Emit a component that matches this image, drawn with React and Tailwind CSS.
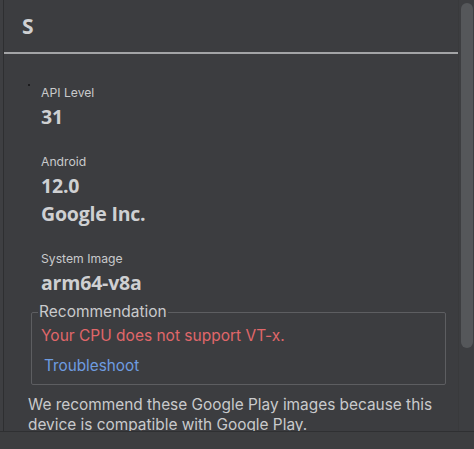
import React from "react";

const Field = ({ label, values }) => (
  <div className="mb-[25px]">
    <div className="text-[12.2px] leading-[16px] text-[#c9cacc]">{label}</div>
    {values.map((v) => (
      <div key={v} className="mt-[4px] font-['Open_Sans',sans-serif] text-[19.5px] font-bold leading-[24px] tracking-[-0.2px] text-[#cfd0d2]">
        {v}
      </div>
    ))}
  </div>
);

const App = () => {
  return (
    <div className="flex h-[449px] w-[474px] flex-col overflow-hidden bg-[#3c3d40] font-['Inter',sans-serif]">
      <div className="flex h-[431px] min-h-0">
        {/* left edge */}
        <div className="w-[3px] bg-[#3e3f42]" />
        <div className="w-px bg-[#2e2f31]" />

        {/* main panel */}
        <div className="flex min-w-0 flex-1 flex-col overflow-hidden">
          <div className="flex h-[54px] shrink-0 items-center border-b-2 border-[#a3a4a6] pl-[18px] pt-[2px]">
            <span className="font-['Open_Sans',sans-serif] text-[21px] font-bold text-[#cfd0d2]">S</span>
          </div>

          <div className="relative pl-[37px] pt-[31px]">
            <span className="absolute left-[24px] top-[30px] h-[2px] w-[2px] bg-[#1c1c1e]" />
            <Field label="API Level" values={["31"]} />
            <Field label="Android" values={["12.0", "Google Inc."]} />
            <Field label="System Image" values={["arm64-v8a"]} />
          </div>

          <fieldset className="ml-[27px] mr-[12px] -mt-[17px] shrink-0 rounded-[2px] border border-[#5d5e61] px-[9px] pb-[9px]">
            <legend className="ml-[-3px] px-[1px] text-[15.5px] leading-[18px] text-[#c9cacc]">Recommendation</legend>
            <div className="mt-[6px] text-[15.5px] leading-[18px] text-[#e0676a]">Your CPU does not support VT-x.</div>
            <div className="mt-[12px] pl-[3px] text-[15.3px] leading-[18px] text-[#6e9ce0]">Troubleshoot</div>
          </fieldset>

          <p className="mt-[10px] pl-[24px] pr-[12px] text-[15.4px] leading-[20px] text-[#c9cacc]">
            We recommend these Google Play images because this device is compatible with Google Play.
          </p>
        </div>

        {/* scrollbar */}
        <div className="w-[16px] border-l border-[#393a3c] bg-[#3d3e41] pt-[3px]">
          <div className="ml-[2px] h-[345px] w-[12px] rounded-full bg-[#55575a]" />
        </div>
      </div>

      <div className="flex-1 border-t border-[#2f3032] bg-[#3d3e40]" />
    </div>
  );
};

export default App;
